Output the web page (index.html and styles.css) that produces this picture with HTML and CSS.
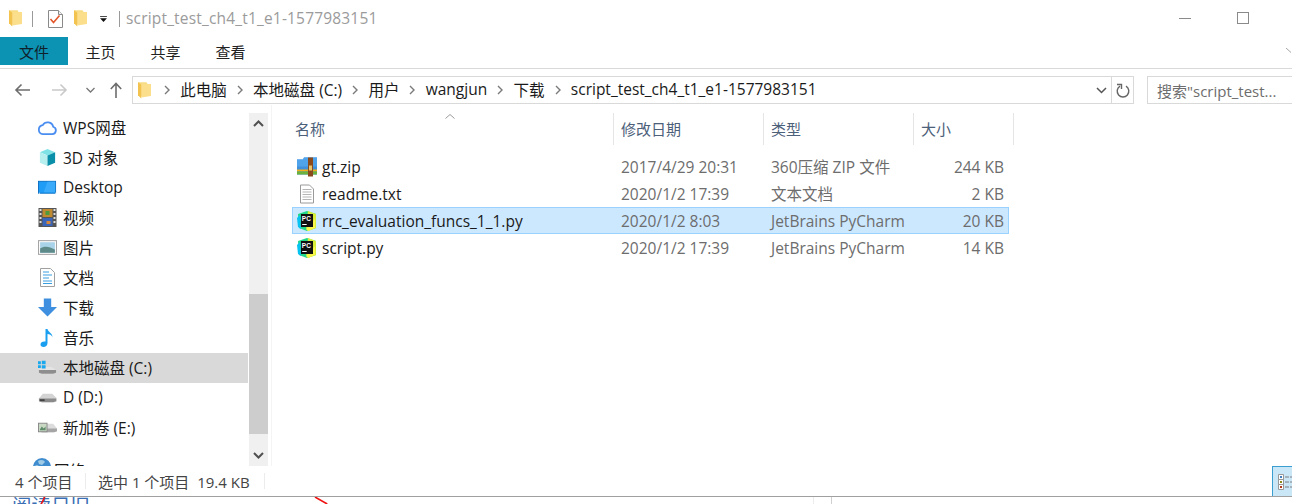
FILE: index.html
```html
<!DOCTYPE html>
<html lang="zh-CN">
<head>
<meta charset="utf-8">
<title>script_test_ch4_t1_e1-1577983151</title>
<link rel="stylesheet" href="styles.css">
</head>
<body>
<svg class="defs" width="0" height="0" aria-hidden="true">
  <symbol id="folder" viewBox="0 0 14 18">
    <path d="M0 0h9l1 1v1h4v13H3.500L0 13z" fill="#f9dc86"/>
    <path d="M3.500 2.500L14 2v13l-10.500 1.500z" fill="#fcdf8c"/>
    <path d="M3.500 2.500v15L0 14V0z" fill="#f2c44f"/>
  </symbol>
  <symbol id="chev" viewBox="0 0 6 10"><path d="M1 1l4 4-4 4" fill="none" stroke="#7a7a7a" stroke-width="1.400"/></symbol>
  <symbol id="pc" viewBox="0 0 20 20">
    <path d="M1 3l9-3 9 3v14l-9 3-8-3z" fill="#21d789"/>
    <path d="M11 0l8 3v14l-8 3-2-4z" fill="#d8ee3a"/>
    <path d="M18 8v9l-7 3-2-2z" fill="#fcf84a"/>
    <path d="M0 7l3-3 1 14-3-2z" fill="#07c3f2"/>
    <rect x="4" y="3" width="12" height="13" fill="#111"/>
    <text x="4.800" y="9.600" class="pc-text">PC</text>
    <rect x="5.200" y="13" width="4.500" height="1" fill="#fff"/>
  </symbol>
</svg>
<div class="window">
  <header class="title">
    <svg class="ico-folder"><use href="#folder"/></svg>
    <span class="vsep vsep-a"></span>
    <svg class="ico-check" viewBox="0 0 15 18"><path d="M.5.500h10l4 4v13H.5z" fill="#fff" stroke="#8a8a8a"/><path d="M10.500.500v4h4" fill="#eee" stroke="#8a8a8a"/><path d="M2.500 9l3 3.500 6-7" fill="none" stroke="#e2562a" stroke-width="1.600"/></svg>
    <svg class="ico-folder ico-folder-b"><use href="#folder"/></svg>
    <svg class="ico-drop" viewBox="0 0 8 7"><path d="M0 0h8v1H0zM0 2.500h8L4 7z" fill="#111"/></svg>
    <span class="vsep vsep-b"></span>
    <span class="title-text">script_test_ch4_t1_e1-1577983151</span>
    <span class="win-min"></span>
    <span class="win-max"></span>
  </header>
  <nav class="tabs">
    <span class="tab tab-file">文件</span>
    <span class="tab">主页</span>
    <span class="tab">共享</span>
    <span class="tab">查看</span>
    <svg class="ribbon-chev" viewBox="0 0 6 5"><path d="M0 0l5 4.500" fill="none" stroke="#a5a5a5"/></svg>
  </nav>
  <div class="addr-row">
    <svg class="nav-arrow" viewBox="0 0 16 14"><path d="M16 7H2M7.500 1.500L2 7l5.500 5.500" fill="none" stroke="#6d6d6d" stroke-width="1.600"/></svg>
    <svg class="nav-arrow nav-fwd" viewBox="0 0 16 14"><path d="M0 7h14M8.500 1.500L14 7l-5.500 5.500" fill="none" stroke="#c9c9c9" stroke-width="1.600"/></svg>
    <svg class="nav-down" viewBox="0 0 9 6"><path d="M.5 1l4 4 4-4" fill="none" stroke="#777" stroke-width="1.300"/></svg>
    <svg class="nav-up" viewBox="0 0 12 16"><path d="M6 16V2M.8 7L6 1.500 11.200 7" fill="none" stroke="#6d6d6d" stroke-width="1.600"/></svg>
    <div class="addr">
      <svg class="addr-folder"><use href="#folder"/></svg>
      <svg class="crumb-chev"><use href="#chev"/></svg><span class="crumb">此电脑</span>
      <svg class="crumb-chev"><use href="#chev"/></svg><span class="crumb">本地磁盘 (C:)</span>
      <svg class="crumb-chev"><use href="#chev"/></svg><span class="crumb">用户</span>
      <svg class="crumb-chev"><use href="#chev"/></svg><span class="crumb">wangjun</span>
      <svg class="crumb-chev"><use href="#chev"/></svg><span class="crumb">下载</span>
      <svg class="crumb-chev"><use href="#chev"/></svg><span class="crumb">script_test_ch4_t1_e1-1577983151</span>
      <svg class="addr-drop" viewBox="0 0 11 7"><path d="M1 1l4.500 4.500L10 1" fill="none" stroke="#555" stroke-width="1.500"/></svg>
      <span class="refresh">
        <svg class="refresh-ico" viewBox="0 0 14 15"><path d="M4 3.200A5.800 5.800 0 1 0 10 3.200" fill="none" stroke="#666" stroke-width="1.400"/><path d="M1 1.500h4.500v4.500" fill="none" stroke="#666" stroke-width="1.400" /></svg>
      </span>
    </div>
    <div class="search">搜索"script_test...</div>
  </div>
  <main class="main">
    <aside class="nav">
      <div class="nav-item"><svg class="nav-ico" viewBox="0 0 20 16"><path d="M5 15h10a4 4 0 0 0 1-7.800A6 6 0 0 0 5 5.500 4.800 4.800 0 0 0 5 15z" fill="none" stroke="#4a8df0" stroke-width="1.900"/></svg>WPS网盘</div>
      <div class="nav-item"><svg class="nav-ico" viewBox="0 0 20 20"><path d="M10 1l8 3.500-8 3.500-8-3.500z" fill="#7fe3e6"/><path d="M2 4.500L10 8v11l-8-3.500z" fill="#b7eeee"/><path d="M18 4.500L10 8v11l8-3.500z" fill="#0a8fa8"/></svg>3D 对象</div>
      <div class="nav-item"><svg class="nav-ico" viewBox="0 0 20 14"><rect x=".5" y=".5" width="18" height="12.500" fill="#1e9cf6" stroke="#0b6fc4"/><path d="M1 13h18" stroke="#fff" stroke-dasharray="1 16"/><path d="M10 1h8v11h-12z" fill="#3aabfa"/></svg>Desktop</div>
      <div class="nav-item"><svg class="nav-ico" viewBox="0 0 18 19"><rect width="18" height="19" fill="#555"/><path d="M1 1h2v2H1zM1 5h2v2H1zM1 9h2v2H1zM1 13h2v2H1zM15 1h2v2h-2zM15 5h2v2h-2zM15 9h2v2h-2zM15 13h2v2h-2z" fill="#ddd"/><rect x="4" y="1" width="10" height="8" fill="#c08a30"/><rect x="4" y="10" width="10" height="8" fill="#3a65b8"/><rect x="7" y="3" width="4" height="4" fill="#4f9a3d"/><rect x="8" y="13" width="4" height="3" fill="#d4863a"/></svg>视频</div>
      <div class="nav-item"><svg class="nav-ico" viewBox="0 0 18 14"><rect x=".5" y=".5" width="17" height="13" fill="#fff" stroke="#a5a5a5"/><rect x="2" y="2" width="14" height="10" fill="#a9d3e8"/><path d="M2 8c4-3 9-2 14 1v3H2z" fill="#5e8b8a"/></svg>图片</div>
      <div class="nav-item"><svg class="nav-ico" viewBox="0 0 15 19"><path d="M.5.500h10l4 4v14H.5z" fill="#fff" stroke="#a0a0a0"/><path d="M3 4h6M3 7h9M3 10h6M3 13h9M3 15.500h9" stroke="#3a9fe0" stroke-width="1.200"/></svg>文档</div>
      <div class="nav-item"><svg class="nav-ico" viewBox="0 0 18 17"><path d="M5.500 0h7v8H18l-9 9-9-9h5.500z" fill="#3f8fe0"/></svg>下载</div>
      <div class="nav-item"><svg class="nav-ico" viewBox="0 0 14 19"><path d="M5 1h2c.5 3 5 4 5 8-1-2-3-3-5-3v9c0 2.500-2 4-4 4s-3-1-3-2.500C0 14 2.500 13 5 13.500z" fill="#1a9ff0"/></svg>音乐</div>
      <div class="nav-item nav-active"><svg class="nav-ico" viewBox="0 0 20 15"><path d="M1 10l4-3h9l5 3v3l-3 1H4l-3-1z" fill="#e4e4e4"/><path d="M1 10h18v3l-3 1H4l-3-1z" fill="#8e8e8e"/><path d="M0 1h3v3H0zM4 .5h4V4H4zM0 5h3v3H0zM4 5h4v3.500H4z" fill="#18a8ee"/></svg>本地磁盘 (C:)</div>
      <div class="nav-item"><svg class="nav-ico" viewBox="0 0 20 12"><path d="M1 7l4-5h10l5 5v3l-3 1H4l-3-1z" fill="#d4d4d4"/><path d="M1 7h18v3l-3 1H4l-3-1z" fill="#8a8a8a"/><rect x="2" y="8" width="5" height="1.500" fill="#333"/></svg>D (D:)</div>
      <div class="nav-item"><svg class="nav-ico" viewBox="0 0 20 14"><path d="M2 8l5-5h9l4 5v3l-3 1H4l-2-1z" fill="#dcdcdc"/><path d="M2 8h18v3l-3 1H4l-2-1z" fill="#a5a5a5"/><rect x=".5" y="2.500" width="9" height="9" fill="#c9d9c4" stroke="#888"/><path d="M2 9l2-3 2 2 2-2v4H2z" fill="#5e8b6a"/></svg>新加卷 (E:)</div>
      <div class="nav-item nav-net"><svg class="nav-ico" viewBox="0 0 22 24"><circle cx="13" cy="9" r="9" fill="#3f8ccf"/><path d="M9 3c3-2 6-1 7 1l-3 3-3-1zM0 10l8-3 6 3-4 6H2z" fill="#9fcbe6"/></svg>网络</div>
    </aside>
    <div class="scrollbar">
      <svg class="sb-arrow" viewBox="0 0 11 7"><path d="M1 6l4.500-4.500L10 6" fill="none" stroke="#505050" stroke-width="2"/></svg>
      <div class="sb-space"></div>
      <div class="sb-thumb"></div>
      <svg class="sb-arrow sb-arrow-down" viewBox="0 0 11 7"><path d="M1 1l4.500 4.500L10 1" fill="none" stroke="#505050" stroke-width="2"/></svg>
    </div>
    <section class="list">
      <div class="sort-mark"><svg class="sort-ico" viewBox="0 0 10 5"><path d="M.5 4.500L5 .5l4.500 4" fill="none" stroke="#9a9a9a"/></svg></div>
      <div class="head">
        <span class="h h-name">名称</span>
        <span class="h h-date">修改日期</span>
        <span class="h h-type">类型</span>
        <span class="h h-size">大小</span>
      </div>
      <div class="row">
        <svg class="file-ico" viewBox="0 0 20 19"><path d="M0 2h6l1-2h13v17H0z" fill="#3f8fdc"/><path d="M0 2h6l1-2h13v9H0z" fill="#4ea3ea"/><rect y="12" width="20" height="2" fill="#f2b01c"/><rect y="14" width="20" height="3" fill="#6bb33a"/><rect x="11" width="5" height="19" fill="#8a4a1c"/><rect x="12" y="8" width="3" height="5" fill="#e8c36a"/></svg>
        <span class="c-name">gt.zip</span><span class="c-date">2017/4/29 20:31</span><span class="c-type">360压缩 ZIP 文件</span><span class="c-size">244 KB</span>
      </div>
      <div class="row">
        <svg class="file-ico" viewBox="0 0 20 19"><path d="M3.500.5h9l4 4v14h-13z" fill="#fff" stroke="#9a9a9a"/><path d="M5.500 5h9M5.500 7.500h9M5.500 10h9M5.500 12.500h9M5.500 15h9" stroke="#b5b5b5"/></svg>
        <span class="c-name">readme.txt</span><span class="c-date">2020/1/2 17:39</span><span class="c-type">文本文档</span><span class="c-size">2 KB</span>
      </div>
      <div class="row row-sel">
        <svg class="file-ico"><use href="#pc"/></svg>
        <span class="c-name">rrc_evaluation_funcs_1_1.py</span><span class="c-date">2020/1/2 8:03</span><span class="c-type">JetBrains PyCharm</span><span class="c-size">20 KB</span>
      </div>
      <div class="row">
        <svg class="file-ico"><use href="#pc"/></svg>
        <span class="c-name">script.py</span><span class="c-date">2020/1/2 17:39</span><span class="c-type">JetBrains PyCharm</span><span class="c-size">14 KB</span>
      </div>
    </section>
  </main>
  <footer class="status">
    <span class="st st-a">4 个项目</span>
    <span class="st st-b">选中 1 个项目&nbsp;&nbsp;19.4 KB</span>
    <div class="view-toggle">
      <svg class="view-ico" viewBox="0 0 18 16"><path d="M.5.500h5v5h-5zM.5 5.500h5v5h-5zM.5 10.500h5v5h-5z" fill="#fff" stroke="#999"/><rect x="2" y="2" width="2" height="2" fill="#3f7fc0"/><rect x="2" y="7" width="2" height="2" fill="#8e8a1a"/><rect x="2" y="12" width="2" height="2" fill="#b03a1a"/><path d="M7 3h4M12 3h4M7 8h4M12 8h4M7 13h4M12 13h4" stroke="#808080"/></svg>
    </div>
  </footer>
</div>
<div class="behind">
  <div class="behind-text">阅读日旧</div>
  <svg class="red red-a" viewBox="0 0 6 8"><path d="M5 0L1 8" stroke="#f01010" stroke-width="1.800"/></svg>
  <svg class="red red-b" viewBox="0 0 16 8"><path d="M0 0l14 8" stroke="#f01010" stroke-width="1.800"/></svg>
  <span class="behind-line bl-a"></span>
  <span class="behind-line bl-b"></span>
</div>
</body>
</html>
```
FILE: styles.css
```css
* { box-sizing: border-box; }
html, body { margin: 0; padding: 0; }
body {
  width: 1292px;
  height: 504px;
  overflow: hidden;
  background: #fff;
  color: #1a1a1a;
  font-family: "Open Sans", "Noto Sans CJK SC", sans-serif;
  font-size: 15.500px;
  position: relative;
}
.defs { position: absolute; }
.pc-text { font: 700 6.500px "Liberation Sans", sans-serif; fill: #fff; }

.window { height: 497px; display: flex; flex-direction: column; border-bottom: 1px solid #a0a0a0; }

/* title bar */
.title { height: 37px; flex: none; display: flex; align-items: center; padding-left: 9px; }
.ico-folder { width: 13px; height: 17px; flex: none; }
.ico-folder-b { margin-left: 11px; }
.vsep { width: 1px; height: 16px; background: #9a9a9a; flex: none; }
.vsep-a { margin-left: 10px; }
.ico-check { width: 15px; height: 18px; margin-left: 15px; flex: none; }
.ico-drop { width: 7px; height: 6px; margin-left: 13px; flex: none; }
.vsep-b { margin-left: 12px; }
.title-text { margin: 0 0 2px 6px; color: #9b9b9b; letter-spacing: .18px; }
.win-min { margin-left: auto; width: 12px; height: 1px; background: #8a8a8a; flex: none; }
.win-max { margin-left: 46px; margin-right: 43px; width: 12px; height: 12px; border: 1px solid #8a8a8a; flex: none; position: relative; top: -1px; }

/* tabs */
.tabs { height: 32px; flex: none; display: flex; align-items: flex-start; border-bottom: 1px solid #d9d9d9; position: relative; }
.tab { height: 28px; width: 65px; display: flex; align-items: center; justify-content: center; font-size: 15px; color: #222; }
.tab-file { width: 68px; background: #0c93b3; color: #10202a; }
.ribbon-chev { position: absolute; right: 0; top: 11px; width: 6px; height: 5px; }

/* address */
.addr-row { height: 36px; flex: none; display: flex; align-items: center; padding: 7px 0 1px 14px; }
.nav-arrow { width: 16px; height: 14px; flex: none; }
.nav-fwd { margin-left: 22px; }
.nav-down { width: 9px; height: 6px; margin-left: 18px; flex: none; }
.nav-up { width: 12px; height: 16px; margin-left: 15px; flex: none; }
.addr { margin-left: 10px; width: 1002px; height: 28px; border: 1px solid #d9d9d9; display: flex; align-items: center; padding-left: 5px; flex: none; }
.addr-folder { width: 13px; height: 17px; flex: none; }
.crumb-chev { width: 6px; height: 10px; margin: 0 10.300px 0 10px; flex: none; }
.addr-folder + .crumb-chev { margin-left: 13px; }
.crumb { color: #1a1a1a; white-space: nowrap; margin-bottom: 2px; }
.addr-drop { width: 11px; height: 7px; margin-left: auto; margin-right: 4px; flex: none; }
.refresh { width: 22px; height: 100%; border-left: 1px solid #d9d9d9; display: flex; align-items: center; justify-content: center; flex: none; }
.refresh-ico { width: 14px; height: 15px; }
.search { margin-left: 13px; flex: 1; height: 28px; border: 1px solid #d9d9d9; border-right: 0; display: flex; align-items: center; padding-left: 9px; color: #6d6d6d; font-size: 15px; white-space: nowrap; overflow: hidden; }

/* main */
.main { flex: 1; min-height: 0; display: flex; }
.nav { width: 249px; flex: none; padding-top: 8px; overflow: hidden; }
.nav-item { height: 30px; display: flex; align-items: center; padding: 0 0 2px 38px; white-space: nowrap; color: #1a1a1a; }
.nav-ico { width: 19px; height: 19px; margin-right: 6px; flex: none; }
.nav-active { background: #d9d9d9; width: 248px; }
.nav-net { padding-left: 29px; margin-top: 13px; }
.nav-net .nav-ico { width: 22px; height: 24px; margin-right: 3px; }
.scrollbar { width: 19px; flex: none; margin-top: 8px; background: #f0f0f0; display: flex; flex-direction: column; align-items: center; }
.sb-arrow { width: 11px; height: 7px; margin: 7px 0; flex: none; }
.sb-arrow-down { margin-top: auto; }
.sb-space { height: 160px; flex: none; }
.sb-thumb { width: 100%; height: 140px; background: #cdcdcd; flex: none; }

.list { flex: 1; min-width: 0; padding-left: 20px; position: relative; border-left: 1px solid #f4f4f4; margin-left: 3px; }
.sort-mark { position: absolute; left: 173px; top: 8px; line-height: 0; }
.sort-ico { width: 10px; height: 5px; }
.head { margin-top: 8px; height: 32px; display: flex; margin-bottom: 8px; }
.h { display: flex; align-items: center; font-size: 15px; color: #4c607a; padding: 0 0 2px 7px; border-right: 1px solid #e5e5e5; height: 32px; flex: none; }
.h-name { width: 322px; padding-left: 3px; }
.h-date, .h-type { width: 150px; }
.h-size { width: 100px; }
.row { height: 27px; width: 717px; display: flex; align-items: center; border: 1px solid transparent; color: #6d6d6d; white-space: nowrap; }
.row-sel { background: #cce8ff; border-color: #99d1ff; }
.file-ico { width: 20px; height: 20px; margin-left: 4px; margin-right: 5px; flex: none; }
.c-name { width: 299px; color: #1a1a1a; flex: none; }
.c-date { width: 150px; flex: none; }
.c-type { width: 150px; flex: none; }
.c-size { flex: 1; text-align: right; padding-right: 4px; }

/* status bar */
.status { height: 30px; flex: none; display: flex; align-items: center; position: relative; color: #444; font-size: 15px; background: #fff; }
.st { height: 16px; display: flex; align-items: center; border-right: 1px solid #ececec; white-space: nowrap; }
.st-a { padding-left: 15px; width: 86px; }
.st-b { padding-left: 12px; width: 179px; }
.view-toggle { margin-left: auto; width: 20px; height: 30px; background: #c9e7f7; border: 1px solid #3a9fd0; border-right: 0; border-bottom: 0; display: flex; align-items: center; padding-left: 5px; }
.view-ico { width: 18px; height: 16px; flex: none; }

/* window behind */
.behind { height: 7px; overflow: hidden; position: relative; }
.behind-text { margin-left: 12px; font-size: 19.500px; line-height: 18px; color: #3b6fb5; }
.red { position: absolute; top: 0; height: 7px; }
.red-a { left: 40px; width: 6px; }
.red-b { left: 314px; width: 16px; }
.behind-line { position: absolute; top: 0; width: 1px; height: 7px; }
.bl-a { left: 813px; background: #ececec; }
.bl-b { left: 831px; background: #d0d0d0; }
```
